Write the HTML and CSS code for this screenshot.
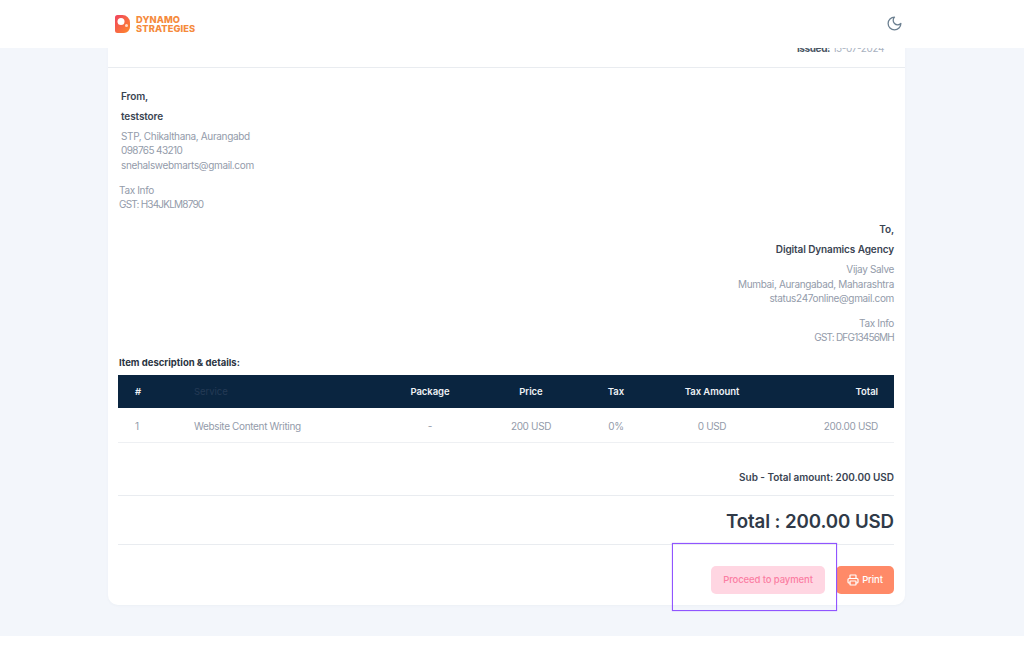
FILE: index.html
```html
<!DOCTYPE html>
<html lang="en">
<head>
<meta charset="utf-8">
<title>Invoice</title>
<link rel="stylesheet" href="styles.css">
</head>
<body>
<header class="topbar">
  <div class="brand">
    <svg class="brand-mark" width="16" height="18" viewBox="0 0 16 18">
      <defs><linearGradient id="lg" x1="0" y1="0" x2="1" y2="1"><stop offset="0" stop-color="#f0435f"/><stop offset="1" stop-color="#ff8a2a"/></linearGradient></defs>
      <path d="M0 2.500A2.500 2.500 0 0 1 2.500 0H7.500a7.500 7.500 0 0 1 7.500 7.500V12a6 6 0 0 1-6 6H2.500A2.500 2.500 0 0 1 0 15.500z" fill="url(#lg)"/>
      <circle cx="6" cy="6.500" r="3.500" fill="#fff"/>
      <circle cx="11.500" cy="10.500" r="1.500" fill="#ffd9c8"/>
    </svg>
    <div class="brand-name">DYNAMO<br>STRATEGIES</div>
  </div>
  <svg class="moon" width="17" height="17" viewBox="0 0 24 24" fill="none" stroke="#6b7f90" stroke-width="1.800" stroke-linecap="round" stroke-linejoin="round"><path d="M12 3a6 6 0 0 0 9 9 9 9 0 1 1-9-9z"/></svg>
</header>
<main class="stage">
  <section class="card">
    <div class="issued"><b>Issued:</b> 15-07-2024</div>
    <div class="from">
      <h4 class="label">From,</h4>
      <h4 class="name">teststore</h4>
      <p class="addr">STP, Chikalthana, Aurangabd<br><span class="narrow">098765 43210</span><br>snehalswebmarts@gmail.com</p>
      <p class="tax">Tax Info<br><span class="gst">GST: H34JKLM8790</span></p>
    </div>
    <div class="to">
      <h4 class="label">To,</h4>
      <h4 class="name">Digital Dynamics Agency</h4>
      <p class="addr">Vijay Salve<br>Mumbai, Aurangabad, Maharashtra<br>status247online@gmail.com</p>
      <p class="tax">Tax Info<br><span class="gst">GST: DFG13456MH</span></p>
    </div>
    <h5 class="items-title">Item description &amp; details:</h5>
    <table class="items">
      <colgroup>
        <col class="c1"><col class="c2"><col class="c3"><col class="c4"><col class="c5"><col class="c6"><col class="c7">
      </colgroup>
      <thead>
        <tr><th class="left">#</th><th class="left service">Service</th><th>Package</th><th>Price</th><th>Tax</th><th>Tax Amount</th><th class="right">Total</th></tr>
      </thead>
      <tbody>
        <tr><td class="left">1</td><td class="left">Website Content Writing</td><td>-</td><td>200 USD</td><td>0%</td><td>0 USD</td><td class="right">200.00 USD</td></tr>
      </tbody>
    </table>
    <div class="subtotal">Sub - Total amount: 200.00 USD</div>
    <div class="total">Total : 200.00 USD</div>
    <div class="actions">
      <button class="btn btn-pay">Proceed to payment</button>
      <button class="btn btn-print">
        <svg width="12" height="12" viewBox="0 0 24 24" fill="none" stroke="#fff" stroke-width="2.400" stroke-linecap="round" stroke-linejoin="round"><path d="M6 9V3a1 1 0 0 1 1-1h10a1 1 0 0 1 1 1v6"/><path d="M6 18H4a2 2 0 0 1-2-2v-5a2 2 0 0 1 2-2h16a2 2 0 0 1 2 2v5a2 2 0 0 1-2 2h-2"/><rect x="6" y="14" width="12" height="8" rx="1"/></svg>
        Print
      </button>
    </div>
  </section>
</main>
<div class="highlight"></div>
</body>
</html>
```
FILE: styles.css
```css
* { box-sizing: border-box; }
html, body { margin: 0; padding: 0; height: 646px; overflow: hidden; background: #fff; }
body { font-family: Inter, "Noto Sans", sans-serif; color: #939baa; font-size: 10px; letter-spacing: -.34px; position: relative; }

.topbar { position: relative; z-index: 2; height: 48px; background: #fff; display: flex; align-items: center; justify-content: space-between; padding: 0 121px 0 115px; }
.brand { display: flex; align-items: center; gap: 5px; margin-top: -1px; }
.brand-mark { display: block; }
.brand-name { font-family: Inter, sans-serif; font-weight: 800; font-size: 9.300px; line-height: 9px; letter-spacing: .1px; color: #f58a3c; }
.moon { display: block; margin-top: -1px; }

.stage { height: 588px; background: #f3f6fb; padding: 0 119px 0 108px; overflow: hidden; }
.card { background: #fff; height: 567px; border-radius: 0 0 10px 10px; padding: 0 11px 0 10px; box-shadow: 0 1px 3px rgba(30, 50, 90, .03); }

.issued { margin: -10px -11px 0 -10px; padding: 0 21px 0 0; border-bottom: 1px solid #e9ecf0; text-align: right; line-height: 20px; height: 30px; color: #a9b2bf; letter-spacing: -.4px; }
.issued b { color: #4a5563; font-weight: 700; }

h4, h5, p { margin: 0; }
.from, .to { line-height: 14.400px; }
.from { padding-top: 20px; }
.from .label, .from .name, .from .addr { margin-left: 3px; }
.from .tax { margin-left: 1px; }
.to { text-align: right; padding-top: 10px; }
.label { font-size: 10px; font-weight: 600; color: #3a4452; line-height: 16px; letter-spacing: -.1px; }
.name { font-size: 10px; font-weight: 600; color: #3a4452; line-height: 16px; margin-top: 4px; letter-spacing: -.1px; }
.addr { margin-top: 5px; }
.tax { margin-top: 11px; line-height: 14px; }
.gst { letter-spacing: -.8px; }
.narrow { letter-spacing: -.6px; }

.items-title { margin-top: 11px; margin-left: 1px; font-size: 9.500px; font-weight: 700; color: #2a3442; line-height: 16px; letter-spacing: 0; }
.items { width: 776px; margin-top: 4px; border-collapse: collapse; table-layout: fixed; }
.c1 { width: 59px; } .c2 { width: 201px; } .c3 { width: 104px; } .c4 { width: 98px; } .c5 { width: 72px; } .c6 { width: 120px; } .c7 { width: 122px; }
.items th { background: #0a2540; color: #eef1f5; height: 33px; font-size: 9.500px; font-weight: 600; text-align: center; padding: 0; letter-spacing: -.05px; }
.items td { height: 34px; text-align: center; border-bottom: 1px solid #eef0f3; padding: 1px 0 0; }
.items .left { text-align: left; padding-left: 17px; }
.items .right { text-align: right; padding-right: 16px; }
.items .service { color: #243a55; font-weight: 400; }

.subtotal { text-align: right; height: 53px; line-height: 68px; border-bottom: 1px solid #e9ecf0; font-size: 10px; font-weight: 600; color: #3a4452; letter-spacing: -.04px; }
.total { text-align: right; height: 49px; line-height: 51px; border-bottom: 1px solid #e9ecf0; font-size: 18.700px; font-weight: 600; color: #303a48; letter-spacing: -.1px; }
.actions { display: flex; justify-content: flex-end; gap: 11px; padding-top: 21px; }
.btn { height: 28px; border: 0; border-radius: 5px; font-family: inherit; font-size: 9.500px; letter-spacing: -.1px; font-weight: 500; display: inline-flex; align-items: center; justify-content: center; gap: 3px; padding: 0; }
.btn-pay { width: 114px; background: #ffd6e2; color: #fb7ea3; }
.btn-print { width: 58px; background: #ff8a68; color: #fff; }

.highlight { position: absolute; left: 672px; top: 543px; width: 165px; height: 68px; border: 1px solid #9055ff; box-shadow: 0 0 1px rgba(144, 85, 255, .7); pointer-events: none; z-index: 3; }
```
